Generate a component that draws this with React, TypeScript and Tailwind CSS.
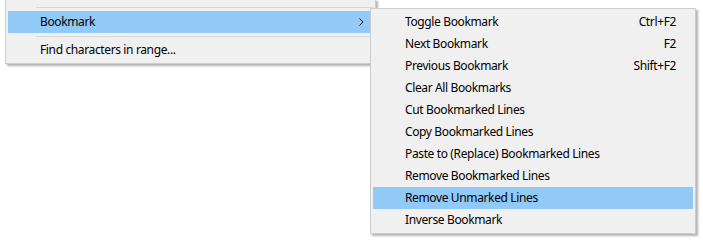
import { ReactNode } from "react";

const font = { fontFamily: '"Noto Sans", "Segoe UI", sans-serif' };

interface RowProps {
  label: string;
  shortcut?: string;
  active?: boolean;
  submenu?: boolean;
}

// One menu entry, 22px high, with the icon gutter kept as left padding.
function Row({ label, shortcut, active, submenu }: RowProps) {
  return (
    <div
      className={`mx-[2px] flex h-[22px] items-center pl-[32px] pr-[17px] text-[12px] tracking-[-0.37px] text-black ${
        active ? "bg-[#91c9f7]" : ""
      }`}
    >
      <span className="flex-1 whitespace-nowrap">{label}</span>
      {shortcut && <span className="whitespace-nowrap">{shortcut}</span>}
      {submenu && (
        <svg width="5" height="8" viewBox="0 0 5 8" className="mr-[-8px]">
          <path d="M0.5 0.5 L4 4 L0.5 7.5" fill="none" stroke="#000" strokeWidth="1" />
        </svg>
      )}
    </div>
  );
}

function Separator({ top, bottom }: { top: number; bottom: number }) {
  return (
    <div style={{ paddingTop: top, paddingBottom: bottom }}>
      <div className="ml-[30px] mr-[2px] h-px bg-[#d7d7d7]" />
    </div>
  );
}

function Menu({ className, children }: { className: string; children: ReactNode }) {
  return (
    <div
      className={`absolute border border-[#cccccc] bg-[#f0f0f0] shadow-[2px_2px_2px_rgba(0,0,0,0.3)] ${className}`}
    >
      {children}
    </div>
  );
}

const items: RowProps[] = [
  { label: "Toggle Bookmark", shortcut: "Ctrl+F2" },
  { label: "Next Bookmark", shortcut: "F2" },
  { label: "Previous Bookmark", shortcut: "Shift+F2" },
  { label: "Clear All Bookmarks" },
  { label: "Cut Bookmarked Lines" },
  { label: "Copy Bookmarked Lines" },
  { label: "Paste to (Replace) Bookmarked Lines" },
  { label: "Remove Bookmarked Lines" },
  { label: "Remove Unmarked Lines", active: true },
  { label: "Inverse Bookmark" },
];

export default function App() {
  return (
    <div className="relative h-[246px] w-[703px] overflow-hidden bg-white" style={font}>
      <Menu className="left-[5px] top-[-1px] w-[371px]">
        <Separator top={7} bottom={3} />
        <Row label="Bookmark" active submenu />
        <Separator top={3} bottom={2} />
        <Row label="Find characters in range..." />
        <div className="h-[2px]" />
      </Menu>
      <Menu className="left-[370px] top-[8px] w-[326px] py-[2px]">
        {items.map((it) => (
          <Row key={it.label} {...it} />
        ))}
      </Menu>
    </div>
  );
}
